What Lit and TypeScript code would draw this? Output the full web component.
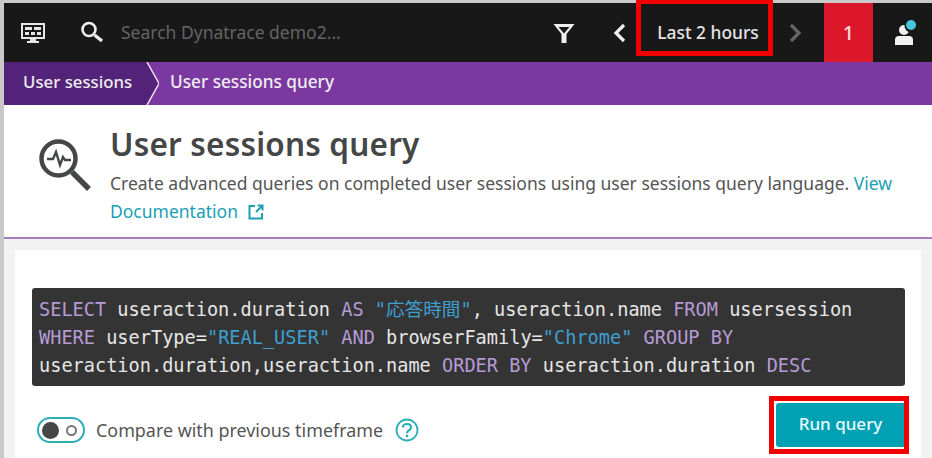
import { LitElement, html, css } from "lit";
import { customElement } from "lit/decorators.js";

@customElement("app-root")
export class AppRoot extends LitElement {
  static styles = css`
    :host { display: block; width: 932px; height: 458px; overflow: hidden; position: relative; background: #f2f2f2; font-family: "Noto Sans", sans-serif; color: #454646; }
    .frame { height: 458px; padding: 3px 0 0 4px; box-sizing: border-box; background: #c9c9c9; display: flex; flex-direction: column; }
    .top { height: 59px; flex: none; background: #181818; display: flex; align-items: center; color: #e8e8e8; padding-right: 11px; }
    .monitor { margin-left: 17px; width: 24px; height: 24px; }
    .search { margin-left: 34px; width: 26px; height: 26px; }
    .ph { margin-left: 16px; font-size: 17.5px; color: #646464; flex: 1; padding-bottom: 1px; }
    .funnel { width: 24px; height: 24px; margin-right: 36px; }
    .chev { width: 16px; height: 20px; }
    .range { width: 160px; text-align: center; font-size: 17.4px; font-weight: 500; color: #e4e4e4; padding-bottom: 1px; }
    .next { margin-right: 20px; }
    .alert { width: 49px; height: 59px; background: #dc172a; color: #f7dada; font-size: 20px; font-weight: 500; display: flex; align-items: center; justify-content: center; }
    .user { width: 30px; height: 30px; margin-left: 18px; }
    .crumbs { height: 43px; flex: none; background: #7c38a1; display: flex; align-items: stretch; color: #eee; font-size: 16.8px; font-weight: 500; }
    .crumb { display: flex; align-items: center; padding-bottom: 4px; }
    .first { background: #53237a; width: 143px; padding-left: 19px; box-sizing: border-box; }
    .sep { width: 13px; height: 43px; margin-left: -1px; flex: none; }
    .second { margin-left: 11px; font-size: 17.2px; }
    .head { height: 134px; flex: none; background: #fff; border-bottom: 2px solid #a57fbd; box-sizing: border-box; display: flex; }
    .glass { width: 56px; height: 56px; margin: 34px 0 0 35px; flex: none; }
    .titles { margin-left: 15px; width: 800px; padding-top: 18px; }
    h1 { margin: 0; font-size: 31.5px; line-height: 41px; font-weight: 600; color: #454646; letter-spacing: 0.2px; }
    p { margin: 5px 0 0; font-size: 17.5px; line-height: 28px; color: #555; }
    a { color: #1a9fb5; }
    .ext { width: 16px; height: 16px; vertical-align: -2px; margin-left: 10px; }
    .body { flex: 1; padding: 11px 11px 0; background: #f2f2f2; }
    .card { background: #fff; height: 100%; padding: 38px 16px 0 17px; box-sizing: border-box; }
    pre { margin: 0; height: 98px; box-sizing: border-box; padding: 6px 7px 0; background: #343434; border-radius: 3px; font-family: "DejaVu Sans Mono", monospace; font-size: 18.6px; line-height: 28px; color: #e6e6e6; white-space: pre-wrap; }
    .k { color: #b79bd6; }
    .s { color: #3f9fd0; }
    pre .cjk { font-family: "Noto Sans CJK JP", sans-serif; }
    .actions { display: flex; align-items: flex-start; justify-content: space-between; padding-top: 17px; }
    .compare { display: flex; align-items: center; padding: 14px 0 0 5px; font-size: 17.9px; color: #555; }
    .toggle { width: 48px; height: 26px; border: 2px solid #2eadb9; border-radius: 14px; box-sizing: border-box; display: flex; align-items: center; justify-content: space-between; padding: 0 6px 0 3px; margin-right: 11px; }
    .knob { width: 17px; height: 17px; border-radius: 50%; background: #454646; }
    .dot { width: 7px; height: 7px; border-radius: 50%; border: 2px solid #777; }
    .help { width: 24px; height: 24px; margin-left: 12px; }
    button { width: 129px; height: 44px; border: none; border-radius: 3px 0 0 3px; background: #00a1b2; color: #e8fbfc; font: 500 17px "Noto Sans", sans-serif; padding: 0 0 4px; }
    .mark { position: absolute; border: 5px solid #f00000; box-sizing: border-box; }
    .m1 { left: 636px; top: -1px; width: 137px; height: 57px; }
    .m2 { left: 769px; top: 396px; width: 140px; height: 58px; }
  `;

  render() {
    return html`
      <div class="frame">
        <div class="top">
          <svg class="monitor" viewBox="0 0 24 24"><path fill="#e6e6e6" fill-rule="evenodd" d="M0 2h24v16h-9v2h3v2H6v-2h3v-2H0zM2 4v12h20V4zM4 6h7v3H4zm9 0h7v3h-7zM4 11h4v3H4zm6 0h4v3h-4zm6 0h4v3h-4z"/></svg>
          <svg class="search" viewBox="0 0 26 26"><circle cx="10" cy="9.5" r="6.500" fill="none" stroke="#eee" stroke-width="2.600"/><path d="M15.500 15l7.500 6" stroke="#eee" stroke-width="3.400" fill="none"/></svg>
          <span class="ph">Search Dynatrace demo2...</span>
          <svg class="funnel" viewBox="0 0 24 24"><path fill="#f0f0f0" fill-rule="evenodd" d="M1.500 3h21L14.500 13v9h-5v-9zM6.500 6l5.500 6.500L17.500 6z"/></svg>
          <svg class="chev" viewBox="0 0 16 20"><path fill="none" stroke="#f2f2f2" stroke-width="3.200" d="M12 2L4 10l8 8"/></svg>
          <span class="range">Last 2 hours</span>
          <svg class="chev next" viewBox="0 0 16 20"><path fill="none" stroke="#666" stroke-width="3.200" d="M3 2l8 8-8 8"/></svg>
          <div class="alert">1</div>
          <svg class="user" viewBox="0 0 30 30"><circle cx="13" cy="12" r="5" fill="#f2f2f2"/><path fill="#f2f2f2" d="M4 27v-5q0-4 4-4h10q4 0 4 4v5z"/><circle cx="20" cy="8" r="6.500" fill="#181818"/><circle cx="20" cy="7" r="5" fill="#45c6da"/></svg>
        </div>
        <div class="crumbs">
          <div class="crumb first">User sessions</div>
          <svg class="sep" viewBox="0 0 13 43"><path fill="#53237a" d="M0 0h1l12 21.500L1 43H0z"/><path fill="none" stroke="#efe6f3" stroke-width="1.500" d="M1 0l12 21.500L1 43"/></svg>
          <div class="crumb second">User sessions query</div>
        </div>
        <div class="head">
          <svg class="glass" viewBox="0 0 56 56"><circle cx="19.500" cy="19.500" r="17" fill="none" stroke="#454646" stroke-width="4.500"/><path fill="none" stroke="#454646" stroke-width="2.400" d="M8 20h6l3-7 4 13 3-8 2 3h6"/><path stroke="#454646" stroke-width="5.500" d="M33 33l17 17"/></svg>
          <div class="titles">
            <h1>User sessions query</h1>
            <p>Create advanced queries on completed user sessions using user sessions query language. <a>View</a><br /><a>Documentation</a><svg class="ext" viewBox="0 0 16 16"><path fill="none" stroke="#1a9fb5" stroke-width="2" d="M7 2H1.500v12.500H14V9M8 8l6.500-6.500M9.500 1.500h5v5"/></svg></p>
          </div>
        </div>
        <div class="body">
          <div class="card">
            <pre><span class="k">SELECT</span> useraction.duration <span class="k">AS</span> <span class="s">"<span class="cjk">応答時間</span>"</span>, useraction.name <span class="k">FROM</span> usersession
<span class="k">WHERE</span> userType=<span class="s">"REAL_USER"</span> <span class="k">AND</span> browserFamily=<span class="s">"Chrome"</span> <span class="k">GROUP BY</span>
useraction.duration,useraction.name <span class="k">ORDER BY</span> useraction.duration <span class="k">DESC</span></pre>
            <div class="actions">
              <div class="compare">
                <span class="toggle"><span class="knob"></span><span class="dot"></span></span>
                Compare with previous timeframe
                <svg class="help" viewBox="0 0 24 24"><circle cx="12" cy="12" r="10.500" fill="none" stroke="#2eadb9" stroke-width="1.800"/><path fill="none" stroke="#2eadb9" stroke-width="2.200" d="M8 9.500q0-3.500 4-3.500t4 3.200q0 2-2 3t-2 3"/><circle cx="12" cy="18" r="1.400" fill="#2eadb9"/></svg>
              </div>
              <button>Run query</button>
            </div>
          </div>
        </div>
      </div>
      <div class="mark m1"></div>
      <div class="mark m2"></div>
    `;
  }
}
